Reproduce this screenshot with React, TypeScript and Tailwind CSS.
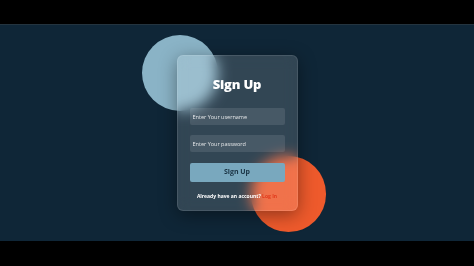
import React from 'react'

export default function App() {
  return (
    <div className="w-[474px] h-[266px] flex flex-col bg-black overflow-hidden" style={{ fontFamily: '"Open Sans", "Liberation Sans", sans-serif' }}>
      <div className="h-[24px] bg-black" />
      <div className="relative h-[217px] bg-[#0f2637] border-t border-[#24343f] flex items-center justify-center">
        {/* decorative circles behind the card */}
        <div className="absolute left-[142px] top-[10px] w-[76px] h-[76px] rounded-full bg-[#8ab3c6]" />
        <div className="absolute left-[251px] top-[131px] w-[75px] h-[76px] rounded-full bg-[#ee5a2c]" />

        <div className="relative w-[121px] h-[156px] rounded-[6px] bg-white/15 backdrop-blur-[7px] border border-white/10 shadow-[0_4px_18px_rgba(0,0,0,0.4)] flex flex-col px-[12px]">
          <h1 className="pt-[20px] text-[13px] leading-[16px] font-extrabold text-white text-center tracking-[-0.2px]">Sign Up</h1>
          <input
            type="text"
            placeholder="Enter Your username"
            className="mt-[16px] h-[17px] w-full rounded-[2px] bg-white/10 px-[3px] text-[5.5px] text-white placeholder:text-white/85 outline-none"
          />
          <input
            type="password"
            placeholder="Enter Your password"
            className="mt-[10px] h-[17px] w-full rounded-[2px] bg-white/10 px-[3px] text-[5.5px] text-white placeholder:text-white/85 outline-none"
          />
          <button className="mt-[11px] h-[19px] w-full rounded-[2px] bg-[#79a8be] text-[7px] font-bold text-[#1a3344]">
            Sign Up
          </button>
          <p className="mt-[10px] text-[5px] leading-[8px] font-bold text-white text-center whitespace-nowrap">
            Already have an account? <span className="text-[#e23a1c]">Log In</span>
          </p>
        </div>
      </div>
      <div className="flex-1 bg-black" />
    </div>
  )
}
